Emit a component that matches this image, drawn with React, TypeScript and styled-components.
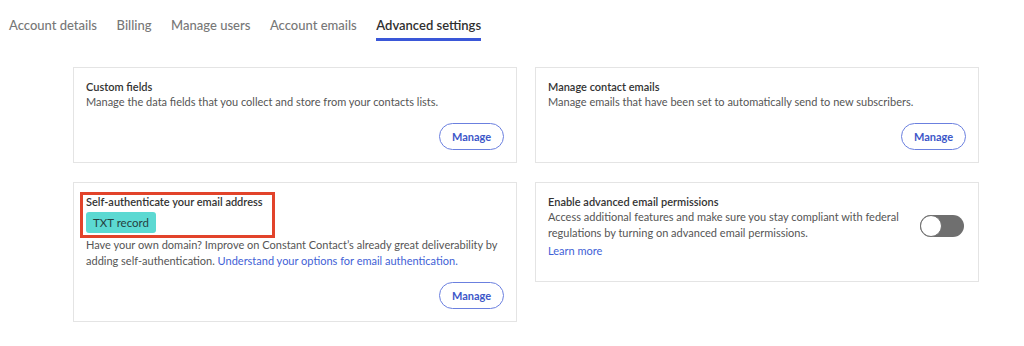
import React from "react";
import styled, { createGlobalStyle } from "styled-components";

const GlobalStyle = createGlobalStyle`
  html, body { margin: 0; padding: 0; background: #ffffff; }
  body { font-family: Lato, "Open Sans", "Liberation Sans", sans-serif; color: #333; }
  * { box-sizing: border-box; }
`;

const Page = styled.div`
  padding: 0 9px;
  width: 1024px;
  height: 346px;
  overflow: hidden;
`;

const TabBar = styled.nav`
  display: flex;
  gap: 19.6px;
  padding-top: 17px;
`;

const Tab = styled.div<{ $active?: boolean }>`
  font-size: 13px;
  line-height: 16px;
  padding-bottom: 5px;
  font-weight: ${(p) => (p.$active ? 600 : 500)};
  color: ${(p) => (p.$active ? "#2f2f2f" : "#777777")};
  border-bottom: 3px solid ${(p) => (p.$active ? "#3a57d8" : "transparent")};
  white-space: nowrap;
`;

const Grid = styled.div`
  display: grid;
  grid-template-columns: 444px 444px;
  column-gap: 18px;
  row-gap: 19px;
  align-items: start;
  margin: 26px 0 0 64px;
`;

const Card = styled.section<{ $minHeight?: number }>`
  border: 1px solid #e4e4e4;
  background: #fff;
  padding: 12px;
  display: flex;
  flex-direction: column;
  min-height: ${(p) => (p.$minHeight ? `${p.$minHeight}px` : "auto")};
`;

const Title = styled.h3`
  margin: 0;
  font-size: 11px;
  line-height: 14px;
  font-weight: 600;
  color: #333;
`;

const Desc = styled.p<{ $mt?: number }>`
  margin: ${(p) => p.$mt ?? 0}px 0 0;
  font-size: 11px;
  line-height: 16px;
  color: #555;
`;

const Link = styled.a`
  color: #3f5fd6;
  text-decoration: none;
`;

const Footer = styled.div`
  display: flex;
  justify-content: flex-end;
  margin-top: 13px;
`;

const ManageButton = styled.button`
  width: 65px;
  height: 27px;
  border-radius: 14px;
  border: 1px solid #6b80df;
  background: #fff;
  color: #3d57c9;
  font-family: inherit;
  font-size: 11px;
  font-weight: 700;
  padding: 0;
  cursor: pointer;
`;

const Highlight = styled.div`
  position: relative;
  width: fit-content;
  display: flex;
  flex-direction: column;
  align-items: flex-start;
  &::after {
    content: "";
    position: absolute;
    top: -3px;
    bottom: -5px;
    left: -6px;
    right: -12px;
    border: 3px solid #e2432a;
    pointer-events: none;
  }
`;

const Badge = styled.span`
  margin-top: 3px;
  height: 21px;
  padding: 0 7px;
  display: inline-flex;
  align-items: center;
  background: #5cd9d2;
  border-radius: 3px;
  font-size: 11.5px;
  color: #26403f;
`;

const Row = styled.div`
  display: flex;
  align-items: flex-start;
  justify-content: space-between;
`;

const TextCol = styled.div`
  width: 358px;
`;

const LearnMore = styled(Link)`
  display: block;
  margin-top: 2px;
  font-size: 11px;
  line-height: 16px;
`;

const Toggle = styled.button`
  position: relative;
  margin: 20px 2px 0 0;
  width: 44px;
  height: 22px;
  border-radius: 11px;
  border: none;
  padding: 0;
  background: #6f6f6f;
  cursor: pointer;
  flex-shrink: 0;
`;

const Knob = styled.span`
  position: absolute;
  top: 0;
  left: 0;
  width: 22px;
  height: 22px;
  border-radius: 50%;
  background: #fff;
  border: 1.5px solid #6f6f6f;
`;

const tabs = ["Account details", "Billing", "Manage users", "Account emails", "Advanced settings"];

export default function App() {
  return (
    <>
      <GlobalStyle />
      <Page>
        <TabBar>
          {tabs.map((t) => (
            <Tab key={t} $active={t === "Advanced settings"}>
              {t}
            </Tab>
          ))}
        </TabBar>
        <Grid>
          <Card>
            <Title>Custom fields</Title>
            <Desc>Manage the data fields that you collect and store from your contacts lists.</Desc>
            <Footer>
              <ManageButton>Manage</ManageButton>
            </Footer>
          </Card>
          <Card>
            <Title>Manage contact emails</Title>
            <Desc>Manage emails that have been set to automatically send to new subscribers.</Desc>
            <Footer>
              <ManageButton>Manage</ManageButton>
            </Footer>
          </Card>
          <Card>
            <Highlight>
              <Title>Self-authenticate your email address</Title>
              <Badge>TXT record</Badge>
            </Highlight>
            <Desc $mt={4}>
              Have your own domain? Improve on Constant Contact’s already great deliverability by adding
              self-authentication. <Link href="#">Understand your options for email authentication.</Link>
            </Desc>
            <Footer>
              <ManageButton>Manage</ManageButton>
            </Footer>
          </Card>
          <Card $minHeight={100}>
            <Row>
              <TextCol>
                <Title>Enable advanced email permissions</Title>
                <Desc>
                  Access additional features and make sure you stay compliant with federal regulations by
                  turning on advanced email permissions.
                </Desc>
                <LearnMore href="#">Learn more</LearnMore>
              </TextCol>
              <Toggle aria-label="Enable advanced email permissions">
                <Knob />
              </Toggle>
            </Row>
          </Card>
        </Grid>
      </Page>
    </>
  );
}
